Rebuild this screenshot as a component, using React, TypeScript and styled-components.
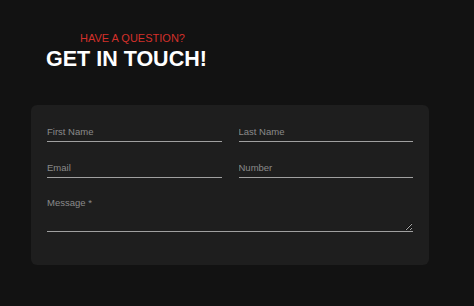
import React from 'react';
import styled, { createGlobalStyle } from 'styled-components';

const GlobalStyle = createGlobalStyle`
  html, body {
    margin: 0;
    padding: 0;
    background: #121212;
    font-family: "Liberation Sans", Arial, sans-serif;
  }
`;

const Page = styled.div`
  min-height: 306px;
  padding: 32px 31px 0 31px;
  box-sizing: border-box;
`;

const Header = styled.header`
  display: flex;
  flex-direction: column;
  align-items: flex-start;
  padding-left: 15px;
  margin-bottom: 33px;
`;

const Eyebrow = styled.span`
  margin-left: 34px;
  font-size: 11px;
  line-height: 13px;
  color: #d3302a;
  text-transform: uppercase;
  margin-bottom: 2px;
`;

const Title = styled.h1`
  margin: 0;
  font-size: 21.5px;
  line-height: 25px;
  font-weight: 700;
  color: #ffffff;
`;

const Card = styled.form`
  width: 398px;
  box-sizing: border-box;
  background: #1e1e1e;
  border-radius: 6px;
  padding: 16px 16px 33px;
  display: grid;
  grid-template-columns: 1fr 1fr;
  column-gap: 17px;
  row-gap: 15px;
`;

const Field = styled.input`
  height: 21px;
  box-sizing: border-box;
  width: 100%;
  background: transparent;
  border: none;
  border-bottom: 1px solid #a0a0a0;
  padding: 0;
  font-family: "Liberation Sans", Arial, sans-serif;
  font-size: 9.5px;
  color: #ddd;
  outline: none;

  &::placeholder {
    color: #8a8a8a;
  }
`;

const Message = styled.textarea`
  grid-column: 1 / -1;
  height: 39px;
  box-sizing: border-box;
  width: 100%;
  background: transparent;
  border: none;
  border-bottom: 1px solid #a0a0a0;
  padding: 4px 0 0;
  font-family: "Liberation Sans", Arial, sans-serif;
  font-size: 9.5px;
  color: #ddd;
  outline: none;
  resize: vertical;

  &::placeholder {
    color: #8a8a8a;
  }
`;

const App = () => {
  return (
    <>
      <GlobalStyle />
      <Page>
        <Header>
          <Eyebrow>Have a question?</Eyebrow>
          <Title>GET IN TOUCH!</Title>
        </Header>
        <Card onSubmit={e => e.preventDefault()}>
          <Field placeholder="First Name" />
          <Field placeholder="Last Name" />
          <Field placeholder="Email" />
          <Field placeholder="Number" />
          <Message placeholder="Message *" />
        </Card>
      </Page>
    </>
  );
};

export default App;
